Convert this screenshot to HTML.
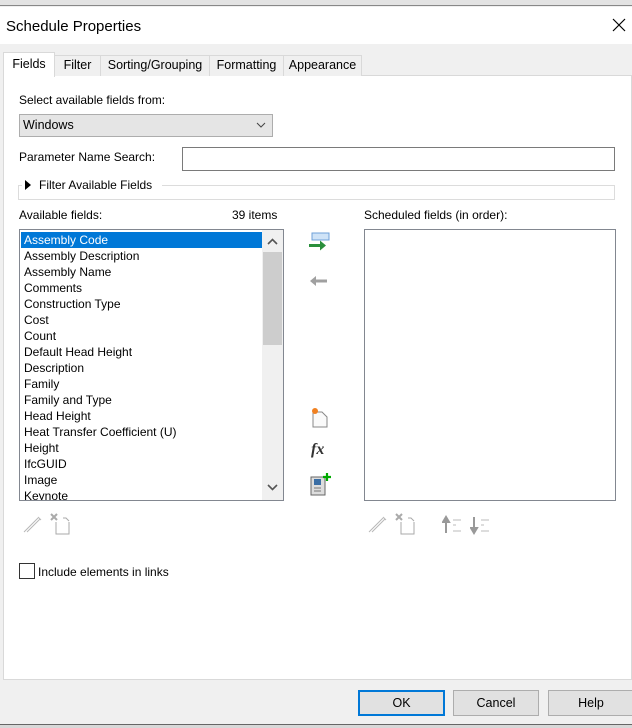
<!DOCTYPE html>
<html><head><meta charset="utf-8"><style>
*{margin:0;padding:0;box-sizing:border-box}
body{width:632px;height:728px;position:relative;background:#f0f0f0;font-family:"Liberation Sans",sans-serif;font-size:12px;color:#000;overflow:hidden}
.a{position:absolute}
.tab{position:absolute;top:55px;height:21px;border:1px solid #d9d9d9;border-bottom:none;background:#f0f0f0;text-align:center;line-height:19px;font-size:12.5px}
.item{height:16px;line-height:16px;padding-left:3px;white-space:nowrap}
.btn{position:absolute;top:690px;height:26px;background:#e1e1e1;border:1px solid #adadad;text-align:center;line-height:24px;font-size:12.5px}
</style></head><body>
<div class="a" style="left:0;top:0;width:632px;height:6px;background:#e3e3e3;border-bottom:1px solid #888"></div>
<div class="a" style="left:0;top:7px;width:632px;height:37px;background:#fff"></div>
<div class="a" style="left:6px;top:18px;font-size:15px">Schedule Properties</div>
<svg class="a" style="left:612px;top:18px" width="14" height="14"><path d="M1 1L13 13M13 1L1 13" stroke="#000" stroke-width="1.2"/></svg>
<div class="a" style="left:3px;top:75px;width:629px;height:605px;background:#fff;border:1px solid #d9d9d9"></div>
<div class="tab" style="left:54px;width:47px">Filter</div>
<div class="tab" style="left:100px;width:110px">Sorting/Grouping</div>
<div class="tab" style="left:209px;width:75px">Formatting</div>
<div class="tab" style="left:283px;width:79px">Appearance</div>
<div class="tab" style="left:3px;top:52px;height:25px;width:52px;background:#fff;line-height:22px">Fields</div>
<div class="a" style="left:19px;top:93px">Select available fields from:</div>
<div class="a" style="left:19px;top:114px;width:254px;height:23px;background:#e5e5e5;border:1px solid #adadad;padding-left:3px;line-height:21px;font-size:12.5px">Windows</div>
<svg class="a" style="left:256px;top:122px" width="10" height="6"><path d="M1 1L5 5L9 1" stroke="#444" fill="none"/></svg>
<div class="a" style="left:19px;top:150px">Parameter Name Search:</div>
<div class="a" style="left:182px;top:147px;width:433px;height:24px;background:#fff;border:1px solid #7a7a7a"></div>
<div class="a" style="left:18px;top:185px;width:597px;height:15px;border:1px solid #dcdcdc"></div>
<div class="a" style="left:22px;top:178px;background:#fff;padding:0 3px 0 3px;width:140px;height:15px"></div>
<svg class="a" style="left:25px;top:180px" width="6" height="10"><path d="M0 0L6 5L0 10Z" fill="#000"/></svg>
<div class="a" style="left:39px;top:178px">Filter Available Fields</div>
<div class="a" style="left:19px;top:208px">Available fields:</div>
<div class="a" style="left:232px;top:208px">39 items</div>
<div class="a" style="left:364px;top:208px">Scheduled fields (in order):</div>
<div class="a" style="left:19px;top:229px;width:265px;height:272px;background:#fff;border:1px solid #828790;overflow:hidden;padding:2px 0 0 1px">
<div style="width:241px">
<div class="item" style="background:#0078d7;color:#fff">Assembly Code</div>
<div class="item">Assembly Description</div><div class="item">Assembly Name</div><div class="item">Comments</div><div class="item">Construction Type</div><div class="item">Cost</div><div class="item">Count</div><div class="item">Default Head Height</div><div class="item">Description</div><div class="item">Family</div><div class="item">Family and Type</div><div class="item">Head Height</div><div class="item">Heat Transfer Coefficient (U)</div><div class="item">Height</div><div class="item">IfcGUID</div><div class="item">Image</div><div class="item">Keynote</div>
</div>
<div class="a" style="left:242px;top:0;width:21px;height:270px;background:#f0f0f0"></div>
<div class="a" style="left:243px;top:22px;width:19px;height:93px;background:#cdcdcd"></div>
<svg class="a" style="left:247px;top:8px" width="11" height="7"><path d="M1 6L5.5 1.5L10 6" stroke="#555" stroke-width="1.6" fill="none"/></svg>
<svg class="a" style="left:247px;top:254px" width="11" height="7"><path d="M1 1L5.5 5.5L10 1" stroke="#555" stroke-width="1.6" fill="none"/></svg>
</div>
<div class="a" style="left:364px;top:229px;width:252px;height:272px;background:#fff;border:1px solid #828790"></div>
<svg class="a" style="left:308px;top:232px" width="24" height="22"><rect x="4" y="1" width="17" height="7" fill="#cfe3f7" stroke="#6fa0d8"/><path d="M1 12H12V8.5L18 13.5L12 18.5V15H1Z" fill="#2a8f3c"/></svg>
<svg class="a" style="left:308px;top:275px" width="20" height="12"><path d="M19 4.5H8V1L2 6L8 11V7.5H19Z" fill="#a0a0a0"/></svg>
<svg class="a" style="left:310px;top:407px" width="22" height="22"><path d="M3 5H12L17 10V20H3Z" fill="#fafafa" stroke="#888"/><circle cx="5" cy="4" r="3" fill="#f08020"/></svg>
<div class="a" style="left:311px;top:441px;font-family:'Liberation Serif',serif;font-style:italic;font-weight:bold;font-size:16px;color:#333">fx</div>
<svg class="a" style="left:310px;top:473px" width="22" height="24"><rect x="1" y="4" width="14" height="18" fill="#ddd" stroke="#666"/><rect x="4" y="6" width="7" height="6" fill="#3a6ea5"/><path d="M4 15H11M4 18H11" stroke="#777"/><path d="M17 0V8M13 4H21" stroke="#0a0" stroke-width="2.2"/></svg>
<svg class="a" style="left:22px;top:514px" width="20" height="20"><path d="M2 18L16 4M5 18L18 5M16 3L19 6" stroke="#b8b8b8" fill="none"/></svg>
<svg class="a" style="left:50px;top:513px" width="22" height="22"><path d="M1 1L7 7M7 1L1 7" stroke="#aaa" stroke-width="2"/><path d="M6 9V21H19V9M13 5H16L19 8" stroke="#aaa" fill="none"/></svg>
<svg class="a" style="left:367px;top:514px" width="20" height="20"><path d="M2 18L16 4M5 18L18 5M16 3L19 6" stroke="#b8b8b8" fill="none"/></svg>
<svg class="a" style="left:395px;top:513px" width="22" height="22"><path d="M1 1L7 7M7 1L1 7" stroke="#aaa" stroke-width="2"/><path d="M6 9V21H19V9M13 5H16L19 8" stroke="#aaa" fill="none"/></svg>
<svg class="a" style="left:442px;top:515px" width="22" height="20"><path d="M4 18V6M1 7L4 2L7 7Z" stroke="#999" stroke-width="2" fill="#999"/><path d="M11 5H19M11 10H14M11 16H19" stroke="#bbb"/></svg>
<svg class="a" style="left:470px;top:515px" width="22" height="20"><path d="M4 2V14M1 13L4 18L7 13Z" stroke="#999" stroke-width="2" fill="#999"/><path d="M11 5H19M11 10H14M11 16H19" stroke="#bbb"/></svg>
<div class="a" style="left:19px;top:563px;width:16px;height:16px;border:1px solid #333;background:#fff"></div>
<div class="a" style="left:38px;top:565px">Include elements in links</div>
<div class="btn" style="left:358px;width:87px;border:2px solid #0078d7;line-height:22px">OK</div>
<div class="btn" style="left:453px;width:86px">Cancel</div>
<div class="btn" style="left:548px;width:86px">Help</div>
<div class="a" style="left:0;top:724px;width:632px;height:4px;background:#d8d8d8;border-top:1px solid #666"></div>
</body></html>
